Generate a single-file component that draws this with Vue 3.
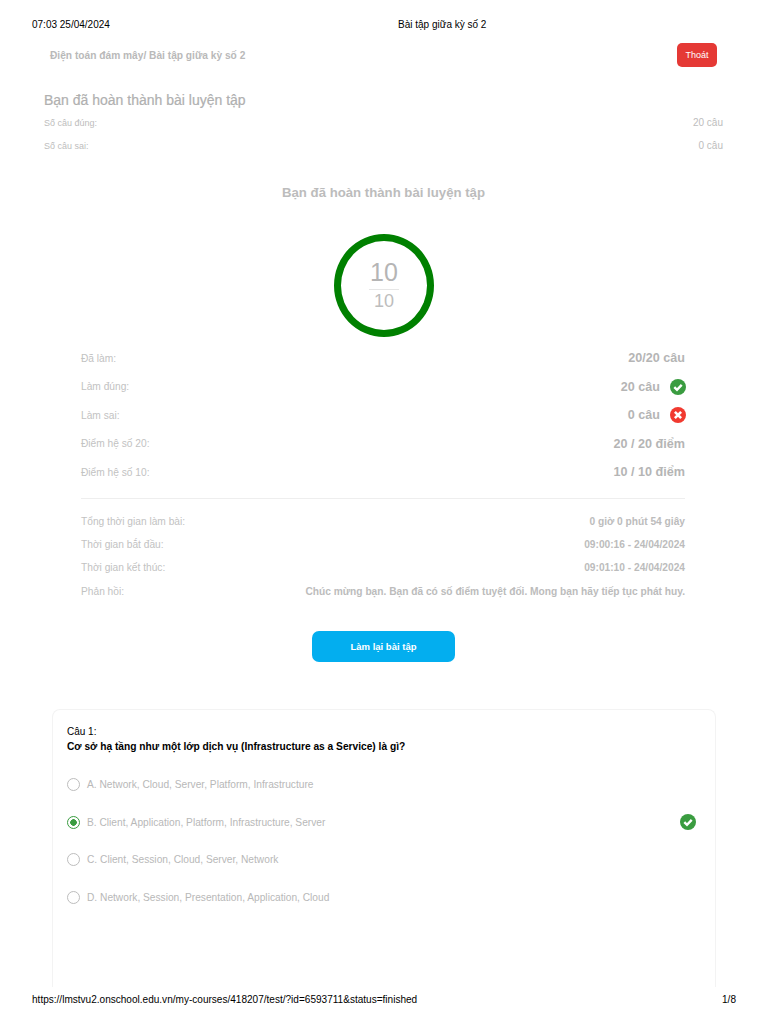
<script setup>
const stats = [
  { label: 'Đã làm:', value: '20/20 câu' },
  { label: 'Làm đúng:', value: '20 câu', icon: 'ok' },
  { label: 'Làm sai:', value: '0 câu', icon: 'bad' },
  { label: 'Điểm hệ số 20:', value: '20 / 20 điểm' },
  { label: 'Điểm hệ số 10:', value: '10 / 10 điểm' },
]
const times = [
  { label: 'Tổng thời gian làm bài:', value: '0 giờ 0 phút 54 giây' },
  { label: 'Thời gian bắt đầu:', value: '09:00:16 - 24/04/2024' },
  { label: 'Thời gian kết thúc:', value: '09:01:10 - 24/04/2024' },
  { label: 'Phản hồi:', value: 'Chúc mừng bạn. Bạn đã có số điểm tuyệt đối. Mong bạn hãy tiếp tục phát huy.' },
]
const options = [
  { text: 'A. Network, Cloud, Server, Platform, Infrastructure' },
  { text: 'B. Client, Application, Platform, Infrastructure, Server', picked: true },
  { text: 'C. Client, Session, Cloud, Server, Network' },
  { text: 'D. Network, Session, Presentation, Application, Cloud' },
]
</script>

<template>
  <div class="page">
    <header class="print-head">
      <span>07:03 25/04/2024</span>
      <span>Bài tập giữa kỳ số 2</span>
    </header>

    <main class="content">
      <div class="topbar">
        <span class="crumb">Điện toán đám mây/ Bài tập giữa kỳ số 2</span>
        <button class="exit">Thoát</button>
      </div>

      <section class="summary">
        <h2 class="summary-title">Bạn đã hoàn thành bài luyện tập</h2>
        <div class="summary-row"><span>Số câu đúng:</span><span class="summary-value">20 câu</span></div>
        <div class="summary-row"><span>Số câu sai:</span><span class="summary-value">0 câu</span></div>
      </section>

      <h2 class="result-title">Bạn đã hoàn thành bài luyện tập</h2>

      <div class="score">
        <span class="score-top">10</span>
        <span class="score-bottom">10</span>
      </div>

      <section class="details">
        <div v-for="s in stats" :key="s.label" class="stat">
          <span class="stat-label">{{ s.label }}</span>
          <span class="stat-value">
            {{ s.value }}
            <svg v-if="s.icon === 'ok'" class="mark stat-mark" viewBox="0 0 16 16">
              <circle cx="8" cy="8" r="8" fill="#3a9c40" />
              <path d="M4.3 8.2 7 10.9 11.7 5.9" fill="none" stroke="#fff" stroke-width="2.4" />
            </svg>
            <svg v-if="s.icon === 'bad'" class="mark stat-mark" viewBox="0 0 16 16">
              <circle cx="8" cy="8" r="8" fill="#f13a30" />
              <path d="M4.9 4.9 11.1 11.1M11.1 4.9 4.9 11.1" fill="none" stroke="#fff" stroke-width="2.6" />
            </svg>
          </span>
        </div>
        <div class="divider"></div>
        <div v-for="t in times" :key="t.label" class="time">
          <span class="time-label">{{ t.label }}</span>
          <span class="time-value">{{ t.value }}</span>
        </div>
      </section>

      <div class="retry-wrap"><button class="retry">Làm lại bài tập</button></div>

      <section class="card">
        <div class="q-num">Câu 1:</div>
        <div class="q-text">Cơ sở hạ tầng như một lớp dịch vụ (Infrastructure as a Service) là gì?</div>
        <div class="options">
          <div v-for="o in options" :key="o.text" class="option">
            <span class="radio" :class="{ on: o.picked }"></span>
            <span class="option-text">{{ o.text }}</span>
            <svg v-if="o.picked" class="mark option-mark" viewBox="0 0 16 16">
              <circle cx="8" cy="8" r="8" fill="#3a9c40" />
              <path d="M4.3 8.2 7 10.9 11.7 5.9" fill="none" stroke="#fff" stroke-width="2.4" />
            </svg>
          </div>
        </div>
      </section>
    </main>

    <footer class="print-foot">
      <span>https://lmstvu2.onschool.edu.vn/my-courses/418207/test/?id=6593711&amp;status=finished</span>
      <span>1/8</span>
    </footer>
  </div>
</template>

<style>
html, body { margin: 0; background: #fff; }
</style>

<style scoped>
.page {
  width: 768px;
  height: 1024px;
  display: flex;
  flex-direction: column;
  overflow: hidden;
  background: #fff;
  font-family: "Liberation Sans", Arial, sans-serif;
  color: #000;
}
.print-head {
  display: grid;
  grid-template-columns: 366px auto;
  justify-content: start;
  padding: 18px 0 0 32px;
  height: 14px;
  font-size: 10px;
  line-height: 14px;
}
.content {
  flex: 1;
  min-height: 0;
  overflow: hidden;
  display: flex;
  flex-direction: column;
  padding-top: 11px;
}
.topbar {
  display: flex;
  justify-content: space-between;
  align-items: center;
  padding: 0 51px 0 50px;
  height: 24px;
}
.crumb { font-size: 10.2px; font-weight: 700; color: #b9b9b9; }
.exit {
  width: 40px;
  height: 24px;
  padding: 0;
  border: 0;
  border-radius: 5px;
  background: #e53935;
  color: #fff;
  font: 9px "Liberation Sans", Arial, sans-serif;
}
.summary { padding: 24px 45px 0 44px; }
.summary-title {
  margin: 0 0 6px;
  font-size: 14px;
  line-height: 18px;
  font-weight: 400;
  color: #b0b0b0;
  -webkit-text-stroke: 0.2px #b0b0b0;
}
.summary-row {
  display: flex;
  justify-content: space-between;
  height: 23px;
  line-height: 16px;
  font-size: 9px;
  color: #bdbdbd;
}
.summary-value { font-size: 10px; }
.result-title {
  margin: 22px 0 0;
  padding-right: 1px;
  text-align: center;
  font-size: 13.2px;
  line-height: 20px;
  font-weight: 700;
  color: #bcbcbc;
}
.score {
  box-sizing: border-box;
  width: 100px;
  height: 103px;
  margin: 31px auto 1px;
  border: 7px solid #008000;
  border-radius: 50%;
  display: flex;
  flex-direction: column;
  align-items: center;
  justify-content: center;
}
.score-top {
  width: 30px;
  padding-bottom: 3px;
  text-align: center;
  font-size: 25px;
  line-height: 28px;
  color: #b5b5b5;
  border-bottom: 1px solid #e6e6e6;
}
.score-bottom {
  margin-bottom: 1px;
  font-size: 18px;
  line-height: 22px;
  color: #bdbdbd;
}
.details { padding: 6px 83px 0 81px; }
.stat {
  display: flex;
  justify-content: space-between;
  align-items: center;
  height: 28.5px;
}
.stat-label { font-size: 10.2px; color: #c2c2c2; }
.stat-value {
  display: flex;
  align-items: center;
  gap: 10px;
  font-size: 12.6px;
  font-weight: 700;
  color: #b5b5b5;
}
.mark { width: 16px; height: 16px; flex: none; }
.stat-mark { margin-right: -1px; }
.divider { height: 1px; margin: 11px 0 11px; background: #eeeeee; }
.time {
  display: flex;
  justify-content: space-between;
  align-items: center;
  height: 23.3px;
  font-size: 10.2px;
}
.time-label { color: #c2c2c2; }
.time-value { font-weight: 700; color: #bcbcbc; }
.retry-wrap { display: flex; justify-content: center; padding: 28px 1px 0 0; }
.retry {
  width: 143px;
  height: 31px;
  padding: 0;
  border: 0;
  border-radius: 7px;
  background: #03aeef;
  color: #fff;
  font: 700 9.5px "Liberation Sans", Arial, sans-serif;
}
.card {
  box-sizing: border-box;
  flex: 1;
  margin: 47px 52px 0;
  padding: 15px 14px 0;
  border: 1px solid #f3f3f3;
  border-bottom: 0;
  border-radius: 8px 8px 0 0;
}
.q-num { font-size: 10px; line-height: 14px; }
.q-text { font-size: 10.2px; line-height: 16px; font-weight: 700; }
.options { padding-top: 11px; display: flex; flex-direction: column; }
.option {
  display: flex;
  align-items: center;
  height: 37.6px;
}
.radio {
  box-sizing: border-box;
  width: 13px;
  height: 13px;
  margin-right: 7px;
  border: 1.8px solid #bdbdbd;
  border-radius: 50%;
  flex: none;
}
.radio.on {
  border-color: #3a9c40;
  background: radial-gradient(circle, #3a9c40 0 3px, #fff 3.6px);
}
.option-text { font-size: 10.2px; color: #b8b8b8; }
.option-mark { margin-left: auto; margin-right: 5px; }
.print-foot {
  display: flex;
  justify-content: space-between;
  padding: 6px 32px 17px;
  font-size: 10.05px;
  line-height: 14px;
}
</style>
